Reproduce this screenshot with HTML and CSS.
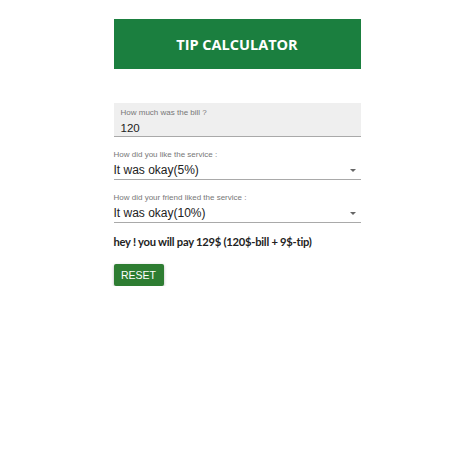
FILE: index.html
```html
<!DOCTYPE html>
<html>
<head>
<meta charset="utf-8">
<link rel="stylesheet" href="styles.css">
</head>
<body>
<div class="app">
  <header class="header"><h1 class="title">TIP CALCULATOR</h1></header>
  <div class="field filled">
    <label class="label">How much was the bill ?</label>
    <div class="value">120</div>
  </div>
  <div class="field select">
    <label class="label">How did you like the service :</label>
    <div class="value row"><span>It was okay(5%)</span><span class="arrow"></span></div>
  </div>
  <div class="field select second">
    <label class="label">How did your friend liked the service :</label>
    <div class="value row"><span>It was okay(10%)</span><span class="arrow"></span></div>
  </div>
  <p class="result">hey ! you will pay 129$ (120$-bill + 9$-tip)</p>
  <button class="reset">RESET</button>
</div>
</body>
</html>
```
FILE: styles.css
```css
html, body { margin: 0; padding: 0; background: #fff; }
body { font-family: "Liberation Sans", Arial, sans-serif; color: #222; }
.app { width: 247px; margin: 19px auto 0; display: flex; flex-direction: column; }
.header { height: 50px; background: #1b7f3f; display: flex; align-items: center; justify-content: center; }
.title { margin: 0; font-family: "Open Sans", sans-serif; font-weight: 700; font-size: 14.5px; color: #fff; letter-spacing: 0; }
.field { display: flex; flex-direction: column; border-bottom: 1px solid #a9a9a9; }
.filled { margin-top: 34px; background: #efefef; height: 34px; box-sizing: border-box; padding: 5px 0 0 7px; }
.label { font-size: 8px; color: #777; line-height: 10px; }
.value { font-size: 11.5px; color: #222; line-height: 14px; margin-top: 2px; }
.filled .value { margin-top: 3px; }
.select { margin-top: 13px; padding-left: 0; }
.select .label { line-height: 10px; }
.select .value { margin-top: 3px; padding-bottom: 2px; line-height: 14px; font-size: 12px; }
.second { margin-top: 13px; }
.row { display: flex; justify-content: space-between; align-items: center; }
.arrow { width: 0; height: 0; border-left: 3.5px solid transparent; border-right: 3.5px solid transparent; border-top: 3.5px solid #666; margin-right: 5px; }
.result { margin: 12px 0 0; font-family: "Lato", sans-serif; font-weight: 700; font-size: 11.2px; letter-spacing: -0.25px; color: #222; line-height: 14px; }
.reset { align-self: flex-start; margin-top: 15px; width: 50px; height: 22px; background: #2e7d32; color: #fff; border: none; border-radius: 2px; font-family: "Liberation Sans", Arial, sans-serif; font-size: 10.5px; padding: 0; box-shadow: 0 1px 3px rgba(0,0,0,0.3); }
```
